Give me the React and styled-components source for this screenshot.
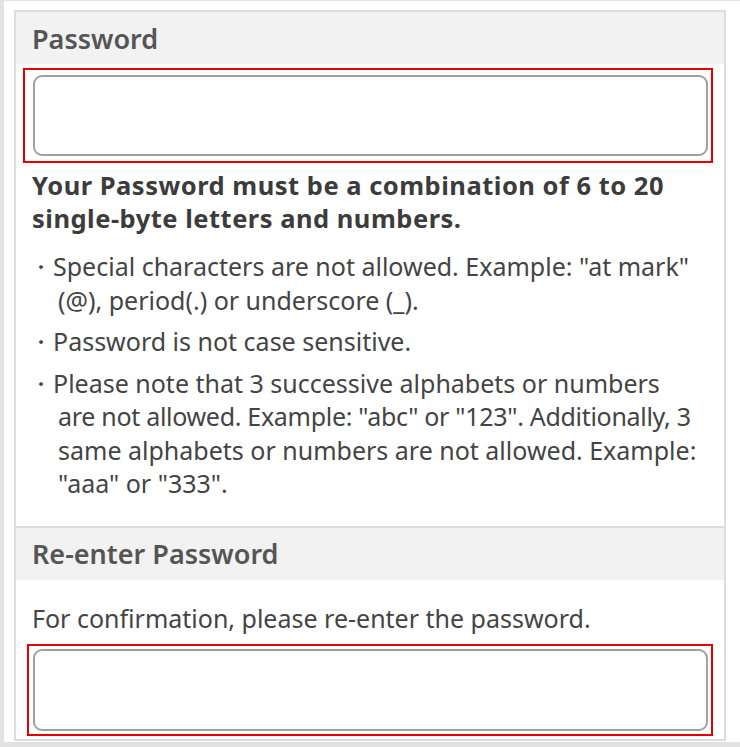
import React from 'react'
import styled, { createGlobalStyle } from 'styled-components'

const GlobalStyle = createGlobalStyle`
    html, body {
        margin: 0;
        padding: 0;
        background: #e2e2e2;
    }
    body {
        font-family: "Noto Sans", "Noto Sans CJK JP", sans-serif;
        color: #444;
    }
`;

const Screen = styled.div`
    width: 736px;
    margin: 1px 0 0 4px;
    background: #fff;
    padding: 9px 14px 1px 10px;
    box-sizing: border-box;
`;

const Card = styled.div`
    border: 2px solid #ddd;
    background: #fff;
`;

const SectionHead = styled.div`
    background: #f2f2f2;
    height: 52px;
    display: flex;
    align-items: center;
    padding-left: 16px;
    font-size: 27px;
    font-weight: 600;
    color: #555;
    border-top: ${p => (p.divided ? '2px solid #ddd' : 'none')};
`;

const Body = styled.div`
    padding: ${p => p.pad};
`;

const Required = styled.div`
    border: 2px solid #e60000;
    margin: ${p => p.margin};
    padding: ${p => p.v}px 3px ${p => p.v}px ${p => p.left}px;
`;

const Input = styled.input`
    display: block;
    width: 100%;
    box-sizing: border-box;
    height: ${p => p.h}px;
    border: 2px solid #a0a0a0;
    border-radius: 9px;
    background: #fff;
    outline: none;
`;

const Lead = styled.p`
    margin: 6px 10px 0 16px;
    font-size: 25.5px;
    font-weight: 700;
    letter-spacing: 0.5px;
    line-height: 33px;
    color: #3c3c3c;
`;

const Notes = styled.ul`
    list-style: none;
    margin: 15px 0 0 16px;
    padding: 0;
    font-size: 25px;
    line-height: 33.5px;
    color: #444;
`;

const Note = styled.li`
    display: flex;
    & + & {
        margin-top: 8px;
    }
`;

const Dot = styled.span`
    flex: 0 0 21px;
    font-family: "Noto Sans CJK JP", sans-serif;
    font-size: 18px;
`;

const NoteText = styled.div`
    display: flex;
    flex-direction: column;
`;

const Line = styled.span`
    white-space: nowrap;
    padding-left: ${p => (p.first ? 0 : 5)}px;
    letter-spacing: ${p => p.tight ? '-0.3px' : '0'};
`;

const Hint = styled.p`
    margin: 22px 0 9px 16px;
    font-size: 25px;
    line-height: 33px;
    color: #444;
`;

const notes = [
    ['Special characters are not allowed. Example: "at mark"', '(@), period(.) or underscore (_).'],
    ['Password is not case sensitive.'],
    [
        'Please note that 3 successive alphabets or numbers',
        'are not allowed. Example: "abc" or "123". Additionally, 3',
        'same alphabets or numbers are not allowed. Example:',
        '"aaa" or "333".',
    ],
]

function App() {
    return (
        <>
            <GlobalStyle />
            <Screen>
                <Card>
                    <SectionHead>Password</SectionHead>
                    <Body pad="4px 0 25px 0">
                        <Required margin="0 11px 0 7px" left={8} v={5}>
                            <Input type="password" h={81} />
                        </Required>
                        <Lead>Your Password must be a combination of 6 to 20 single-byte letters and numbers.</Lead>
                        <Notes>
                            {notes.map((lines, i) => (
                                <Note key={i}>
                                    <Dot>・</Dot>
                                    <NoteText>
                                        {lines.map((l, j) => (
                                            <Line key={j} first={j === 0} tight={l.length > 55}>{l}</Line>
                                        ))}
                                    </NoteText>
                                </Note>
                            ))}
                        </Notes>
                    </Body>
                    <SectionHead divided>Re-enter Password</SectionHead>
                    <Body pad="0 0 3px 0">
                        <Hint>For confirmation, please re-enter the password.</Hint>
                        <Required margin="0 11px 0 11px" left={4} v={3}>
                            <Input type="password" h={82} />
                        </Required>
                    </Body>
                </Card>
            </Screen>
        </>
    )
}

export default App
